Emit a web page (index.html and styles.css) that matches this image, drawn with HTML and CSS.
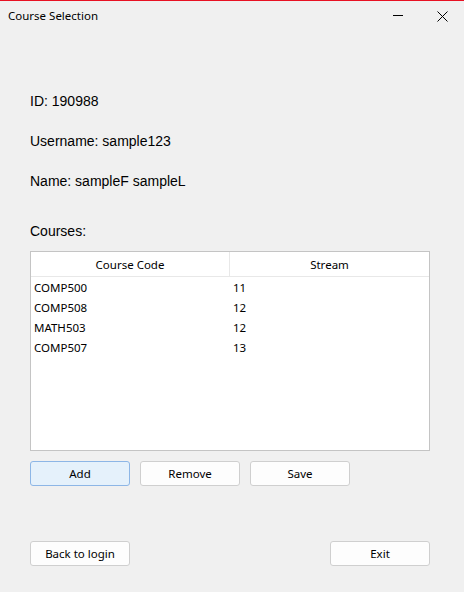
FILE: index.html
```html
<!DOCTYPE html>
<html>
<head>
<meta charset="utf-8">
<title>Course Selection</title>
<link rel="stylesheet" href="styles.css">
</head>
<body>
<div class="window">
  <div class="titlebar">
    <div class="title">Course Selection</div>
    <div class="controls">
      <div class="ctl ctl-min"><svg width="10" height="10" viewBox="0 0 10 10"><path d="M0 4.5H10" stroke="#000" stroke-width="1"/></svg></div>
      <div class="ctl ctl-close"><svg width="11" height="11" viewBox="0 0 11 11"><path d="M0.5 0.5L10.5 10.5M10.5 0.5L0.5 10.5" stroke="#000" stroke-width="1"/></svg></div>
    </div>
  </div>
  <div class="content">
    <div class="label">ID: 190988</div>
    <div class="label">Username: sample123</div>
    <div class="label">Name: sampleF sampleL</div>
    <div class="label courses-label">Courses:</div>
    <div class="table">
      <div class="thead">
        <div class="th th-first">Course Code</div>
        <div class="th">Stream</div>
      </div>
      <div class="tbody">
        <div class="tr"><div class="td td-first">COMP500</div><div class="td">11</div></div>
        <div class="tr"><div class="td td-first">COMP508</div><div class="td">12</div></div>
        <div class="tr"><div class="td td-first">MATH503</div><div class="td">12</div></div>
        <div class="tr"><div class="td td-first">COMP507</div><div class="td">13</div></div>
      </div>
    </div>
    <div class="btn-row">
      <button class="btn btn-default">Add</button>
      <button class="btn">Remove</button>
      <button class="btn">Save</button>
    </div>
    <div class="btn-row bottom-row">
      <button class="btn">Back to login</button>
      <button class="btn">Exit</button>
    </div>
  </div>
</div>
</body>
</html>
```

FILE: styles.css
```css
html, body {
  margin: 0;
  padding: 0;
  background: #f0f0f0;
}
.window {
  width: 464px;
  height: 592px;
  background: #f0f0f0;
  font-family: "Noto Sans", "Open Sans", sans-serif;
  color: #000;
}
.titlebar {
  height: 30px;
  border-top: 1px solid #e81123;
  display: flex;
  align-items: center;
  justify-content: space-between;
}
.title {
  padding-left: 8px;
  font-size: 11.5px;
  line-height: 30px;
}
.controls {
  display: flex;
  height: 30px;
}
.ctl {
  display: flex;
  align-items: center;
  justify-content: center;
  height: 30px;
}
.ctl-min {
  width: 46px;
  padding-bottom: 1px;
}
.ctl-close {
  width: 43px;
  padding-bottom: 2px;
}
.ctl svg {
  display: block;
}
.content {
  padding: 60px 34px 0 30px;
}
.label {
  font-family: "Liberation Sans", Arial, sans-serif;
  font-size: 14px;
  line-height: 20px;
  height: 20px;
  margin-bottom: 20px;
}
.courses-label {
  margin-top: 30px;
  margin-bottom: 10px;
}
.table {
  width: 398px;
  height: 198px;
  border: 1px solid #c4c4c4;
  background: #fff;
  font-size: 11.5px;
}
.thead {
  display: flex;
  height: 24px;
  border-bottom: 1px solid #e8e8e8;
}
.th {
  flex: 1;
  display: flex;
  align-items: center;
  justify-content: center;
}
.th-first {
  border-right: 1px solid #e8e8e8;
  flex: 0 0 198px;
}
.tr {
  display: flex;
  height: 20px;
  align-items: center;
}
.td {
  flex: 1;
  padding-left: 3px;
}
.td-first {
  flex: 0 0 196px;
}
.btn-row {
  display: flex;
  gap: 10px;
  margin-top: 10px;
}
.bottom-row {
  margin-top: 55px;
  justify-content: space-between;
  width: 400px;
}
.btn {
  width: 100px;
  height: 25px;
  margin: 0;
  padding: 0;
  background: #fdfdfd;
  border: 1px solid #cfcfcf;
  border-radius: 3px;
  font-family: "Noto Sans", "Open Sans", sans-serif;
  font-size: 11.5px;
  color: #000;
}
.btn-default {
  background: #e5f1fb;
  border-color: #8db6e6;
}
```
